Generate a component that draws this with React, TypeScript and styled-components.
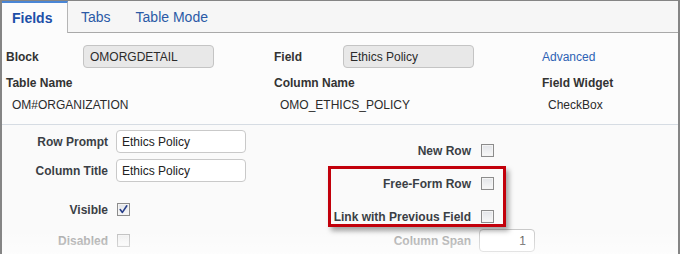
import React from 'react';
import styled, { createGlobalStyle } from 'styled-components';

const GlobalStyle = createGlobalStyle`
    html, body {
        margin: 0;
        padding: 0;
        background: #ffffff;
    }
    #root {
        width: 680px;
        height: 254px;
        overflow: hidden;
    }
`;

const App = () => {
    return (
        <>
            <GlobalStyle />
            <Frame>
                <TabBar>
                    <Tab active>Fields</Tab>
                    <Tab>Tabs</Tab>
                    <Tab>Table Mode</Tab>
                </TabBar>

                <InfoGrid>
                    <InfoLabel>Block</InfoLabel>
                    <ReadOnlyBox>OMORGDETAIL</ReadOnlyBox>
                    <InfoLabel>Field</InfoLabel>
                    <ReadOnlyBox>Ethics Policy</ReadOnlyBox>
                    <Link>Advanced</Link>

                    <InfoLabel span={2}>Table Name</InfoLabel>
                    <InfoLabel span={2}>Column Name</InfoLabel>
                    <InfoLabel>Field Widget</InfoLabel>

                    <InfoValue span={2}>OM#ORGANIZATION</InfoValue>
                    <InfoValue span={2}>OMO_ETHICS_POLICY</InfoValue>
                    <InfoValue>CheckBox</InfoValue>
                </InfoGrid>

                <PropsArea>
                    <LeftColumn>
                        <PropRow top={5}>
                            <PropLabel width={106}>Row Prompt</PropLabel>
                            <TextBox>Ethics Policy</TextBox>
                        </PropRow>
                        <PropRow top={6}>
                            <PropLabel width={106}>Column Title</PropLabel>
                            <TextBox>Ethics Policy</TextBox>
                        </PropRow>
                        <PropRow top={16}>
                            <PropLabel width={106}>Visible</PropLabel>
                            <CheckBox checked />
                        </PropRow>
                        <PropRow top={8}>
                            <PropLabel width={106} muted>Disabled</PropLabel>
                            <CheckBox muted />
                        </PropRow>
                    </LeftColumn>
                    <RightColumn>
                        <PropRow top={14} gap={9}>
                            <PropLabel width={169}>New Row</PropLabel>
                            <CheckBox />
                        </PropRow>
                        <PropRow top={10} gap={9}>
                            <PropLabel width={169}>Free-Form Row</PropLabel>
                            <CheckBox />
                        </PropRow>
                        <PropRow top={10} gap={9}>
                            <PropLabel width={169}>Link with Previous Field</PropLabel>
                            <CheckBox />
                        </PropRow>
                        <PropRow top={1} gap={8}>
                            <PropLabel width={169} muted>Column Span</PropLabel>
                            <SpanBox>1</SpanBox>
                        </PropRow>
                    </RightColumn>
                </PropsArea>

                <Highlight />
                <BottomFade />
            </Frame>
        </>
    );
};

const CheckBox = ({ checked, muted }: { checked?: boolean; muted?: boolean }) => (
    <StyledCheck muted={muted}>
        {checked && (
            <svg width="11" height="11" viewBox="0 0 11 11" fill="none" xmlns="http://www.w3.org/2000/svg">
                <path d="M2.2 5.6L4.4 8.4L8.8 1.8" stroke="#283f8a" strokeWidth="1.6" strokeLinecap="round" strokeLinejoin="round" />
            </svg>
        )}
    </StyledCheck>
);

const Frame = styled.div`
    position: relative;
    width: 680px;
    height: 254px;
    box-sizing: border-box;
    border-left: 2px solid #858585;
    border-right: 2px solid #858585;
    border-top: 1px solid #858585;
    background: #fafafa;
    overflow: hidden;
    font-family: "Liberation Sans", Arial, sans-serif;
    font-size: 12px;
    color: #333333;
`;

const TabBar = styled.div`
    display: flex;
    height: 32px;
    box-sizing: border-box;
    background: #f6f6f6;
    border-bottom: 1px solid #a9a9a9;
`;

const Tab = styled.div<{ active?: boolean }>`
    display: flex;
    align-items: center;
    box-sizing: border-box;
    font-size: 14px;
    padding: ${props => props.active ? '0 14px 0 10px' : '0 12px 0 13px'};
    color: ${props => props.active ? '#1d4fa8' : '#2b5aa6'};
    font-weight: ${props => props.active ? 'bold' : 'normal'};
    background: ${props => props.active ? '#fcfcfc' : 'transparent'};
    border-top: ${props => props.active ? '2px solid #4a86d6' : 'none'};
    border-right: ${props => props.active ? '1px solid #b5b5b5' : 'none'};
    height: ${props => props.active ? '32px' : '31px'};
    width: ${props => props.active ? '66px' : 'auto'};
`;

const InfoGrid = styled.div`
    display: grid;
    grid-template-columns: 77px 191px 69px 199px 1fr;
    grid-template-rows: 23px 14px 14px;
    row-gap: 8px;
    padding: 12px 0 12px 4px;
    background: #fcfcfc;
    border-bottom: 1px solid #d6dce3;
`;

const InfoLabel = styled.div<{ span?: number }>`
    grid-column: span ${props => props.span || 1};
    display: flex;
    align-items: center;
    font-weight: bold;
    color: #333333;
    line-height: 14px;
`;

const InfoValue = styled.div<{ span?: number }>`
    grid-column: span ${props => props.span || 1};
    padding-left: 6px;
    line-height: 14px;
    color: #2b2b2b;
`;

const ReadOnlyBox = styled.div`
    width: 131px;
    height: 23px;
    box-sizing: border-box;
    display: flex;
    align-items: center;
    padding-left: 6px;
    background: #e8e8e8;
    border: 1px solid #c4c4c4;
    border-radius: 4px;
    color: #2b2b2b;
`;

const Link = styled.div`
    display: flex;
    align-items: center;
    color: #2d62b4;
`;

const PropsArea = styled.div`
    display: flex;
`;

const LeftColumn = styled.div`
    width: 300px;
    display: flex;
    flex-direction: column;
`;

const RightColumn = styled.div`
    display: flex;
    flex-direction: column;
`;

const PropRow = styled.div<{ top: number; gap?: number }>`
    display: flex;
    align-items: center;
    height: 23px;
    margin-top: ${props => props.top}px;
    gap: ${props => props.gap ?? 8}px;
`;

const PropLabel = styled.div<{ width: number; muted?: boolean }>`
    width: ${props => props.width}px;
    text-align: right;
    font-weight: bold;
    color: ${props => props.muted ? '#a3a3a3' : '#3a3f45'};
`;

const TextBox = styled.div`
    width: 130px;
    height: 23px;
    box-sizing: border-box;
    display: flex;
    align-items: center;
    padding-left: 5px;
    background: #ffffff;
    border: 1px solid #c9c9c9;
    border-radius: 4px;
    color: #222222;
`;

const SpanBox = styled(TextBox)`
    width: 56px;
    justify-content: flex-end;
    padding: 0 8px 0 0;
    color: #444444;
`;

const StyledCheck = styled.span<{ muted?: boolean }>`
    display: inline-flex;
    align-items: center;
    justify-content: center;
    width: 13px;
    height: 13px;
    margin-left: 1px;
    box-sizing: border-box;
    border: 1px solid ${props => props.muted ? '#bdbdbd' : '#8c8c8c'};
    background: ${props => props.muted
        ? 'linear-gradient(#eeeeee, #fafafa)'
        : 'linear-gradient(#e2e4e8, #f8f8f8)'};
    box-shadow: inset 0 0 0 1px #f4f4f4;
`;

const Highlight = styled.div`
    position: absolute;
    left: 326px;
    top: 165px;
    width: 178px;
    height: 61px;
    box-sizing: border-box;
    border: 3px solid #c2000b;
    box-shadow: 3px 4px 5px rgba(0, 0, 0, 0.35);
    pointer-events: none;
`;

const BottomFade = styled.div`
    position: absolute;
    left: -2px;
    right: -2px;
    bottom: 0;
    height: 24px;
    background: linear-gradient(rgba(255, 255, 255, 0), rgba(255, 255, 255, 0.55));
    pointer-events: none;
`;

export default App;
